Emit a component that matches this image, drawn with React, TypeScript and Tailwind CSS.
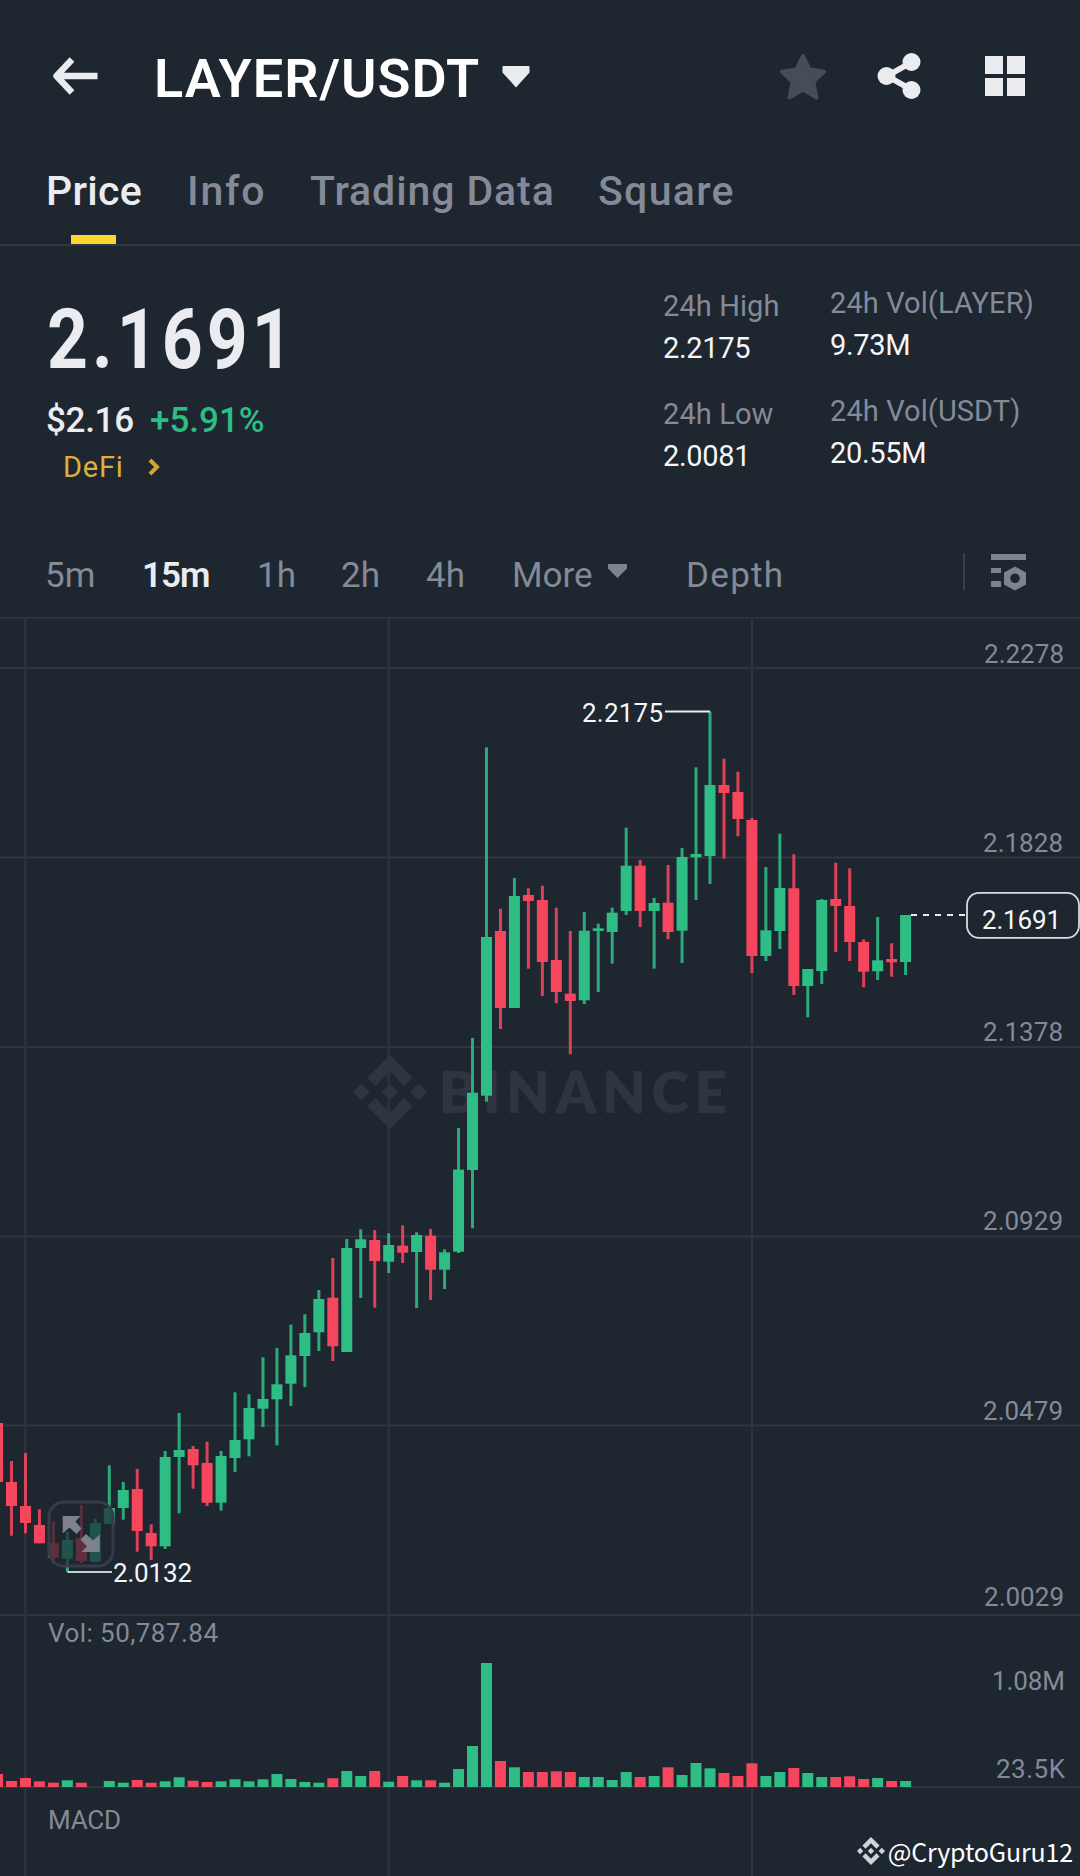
import React from 'react'

type Candle = {
  up: boolean
  high: number
  low: number
  top: number
  bottom: number
  vol: number
}

const UP = '#2ebd85'
const DOWN = '#f6465d'
const STEP = 13.97
const FIRST_X = 11.5
const VOL_BASE = 1787

const c = (side: string, high: number, low: number, top: number, bottom: number, vol: number): Candle => ({
  up: side === 'u',
  high,
  low,
  top,
  bottom,
  vol
})

// first candle is half hidden behind the left edge
const candles: Candle[] = [
  c('d', 1423, 1482, 1423, 1482, 13),
  c('d', 1461, 1535.7, 1482, 1506, 6),
  c('d', 1453, 1533.3, 1506, 1523, 9),
  c('d', 1509.3, 1543.3, 1525, 1543.3, 5.7),
  c('d', 1521.7, 1563.3, 1543.3, 1557.5, 4.3),
  c('u', 1532, 1572, 1540, 1558.7, 6.7),
  c('d', 1505, 1563, 1538, 1561, 4.3),
  c('u', 1519, 1562, 1523, 1561.7, 0),
  c('u', 1465.3, 1524, 1508, 1524, 6),
  c('u', 1482, 1519.7, 1490, 1508, 4.3),
  c('d', 1469, 1551.7, 1489, 1531, 7),
  c('d', 1524.3, 1560, 1533, 1546.3, 4.3),
  c('u', 1451, 1549, 1457, 1546.3, 5.7),
  c('u', 1413, 1513.3, 1450, 1457, 9.7),
  c('d', 1446, 1488.7, 1449, 1465.3, 6.3),
  c('d', 1441.7, 1506, 1463, 1502.7, 5),
  c('u', 1451, 1510.7, 1456, 1502.7, 5.7),
  c('u', 1392.3, 1472, 1440, 1458, 7.7),
  c('u', 1394.3, 1456.3, 1408, 1439.3, 5.7),
  c('u', 1357.3, 1427, 1399, 1408.7, 7.7),
  c('u', 1348, 1445.3, 1384.3, 1399.3, 13),
  c('u', 1324.7, 1406, 1355.3, 1383.7, 8),
  c('u', 1314.3, 1387, 1333, 1356, 5),
  c('u', 1290, 1351, 1299, 1332.3, 4.3),
  c('d', 1258, 1361, 1297.7, 1346.3, 8.7),
  c('u', 1239, 1352, 1248, 1352, 16),
  c('u', 1229.3, 1298, 1239.3, 1248, 11),
  c('d', 1230, 1307.7, 1240, 1261, 16),
  c('u', 1233.3, 1273, 1245, 1261.7, 5.3),
  c('d', 1225.3, 1263, 1245.7, 1252.7, 11),
  c('u', 1232.3, 1308, 1235, 1252, 6.7),
  c('d', 1229, 1300, 1235.7, 1269.7, 6.7),
  c('u', 1249.3, 1289, 1252.3, 1269.7, 4.3),
  c('u', 1128, 1253, 1169.6, 1251.7, 18),
  c('u', 1038, 1228.3, 1092.7, 1170, 41),
  c('u', 747.3, 1101.7, 937, 1095.7, 124),
  c('d', 908.7, 1029, 931, 1008, 26),
  c('u', 878, 1008, 896, 1008, 19.7),
  c('d', 888.3, 968.7, 895, 901, 15),
  c('d', 885.7, 996, 900, 962, 15),
  c('d', 907.7, 1003.3, 960, 992, 15.7),
  c('d', 931, 1054.3, 993.7, 1001, 15),
  c('u', 912, 1004, 930.7, 1000.3, 10),
  c('u', 923.7, 992, 928.3, 931, 10),
  c('u', 907.7, 963.7, 912.7, 932, 7),
  c('u', 827.7, 915, 865.7, 911, 15),
  c('d', 860, 927, 865.7, 911, 10),
  c('u', 898, 968.7, 903, 911, 11),
  c('d', 865, 939.3, 902.7, 932, 19.7),
  c('u', 848, 963, 857, 930.7, 12),
  c('u', 767.3, 900, 854, 857.3, 24),
  c('u', 711.5, 884, 785, 856, 18.7),
  c('d', 758.7, 858.7, 785, 793, 14),
  c('d', 771.7, 836.3, 792, 819, 11),
  c('d', 818, 973, 820, 956, 23.7),
  c('u', 867, 961, 930.3, 956, 11),
  c('u', 833.7, 949, 888, 931, 15),
  c('d', 854.3, 995, 888.3, 986, 19),
  c('u', 969, 1017.3, 969, 986, 14),
  c('u', 899, 984, 900, 971, 10),
  c('d', 862.7, 952, 899, 906, 10),
  c('d', 868.3, 961, 906, 942, 10.7),
  c('d', 939.3, 987.3, 942, 971.7, 8),
  c('u', 917, 980, 960.3, 971.3, 9),
  c('d', 943.3, 976.7, 959, 962.3, 6),
  c('u', 915, 975, 915, 962, 6)
]

const axisLabels = [
  { text: '2.2278', x: 984, y: 663, w: 80 },
  { text: '2.1828', x: 983, y: 852, w: 80 },
  { text: '2.1378', x: 983, y: 1041, w: 80 },
  { text: '2.0929', x: 983, y: 1230, w: 80 },
  { text: '2.0479', x: 983, y: 1419.5, w: 80 },
  { text: '2.0029', x: 984, y: 1606, w: 80 },
  { text: '1.08M', x: 992, y: 1690, w: 73 },
  { text: '23.5K', x: 996, y: 1778, w: 69 }
]

const hLines = [668, 857.5, 1047, 1236.5, 1425.5, 1615, 1787]
const vLines = [25.3, 388.6, 752]

const BinanceMark: React.FC<{ className?: string }> = ({ className }) => (
  <svg viewBox="0 0 24 24" className={className} fill="currentColor">
    <BinancePath />
  </svg>
)

const BinancePath: React.FC = () => (
  <path d="M16.624 13.92l2.7175 2.7154-7.353 7.353-7.353-7.352 2.7175-2.7164 4.6355 4.6595zM21.26 9.284L24 12l-2.7154 2.7164L18.568 12zM11.9885 9.285l2.7163 2.6914-2.7164 2.7174L9.272 12zM2.7164 9.284L5.4088 12l-2.6914 2.6924L0 12zM11.9885.0115l7.353 7.329-2.7174 2.7154-4.6356-4.6356-4.6355 4.6595-2.7174-2.7154z" />
)

const Header: React.FC = () => (
  <header className="flex h-[154px] items-center">
    <svg viewBox="0 0 46 38" className="mb-[2px] ml-[52px] h-[38px] w-[46px] shrink-0" fill="none" stroke="#eaecef" strokeWidth="6.4">
      <path d="M45.5 19H5M20 2.5L4.5 19L20 35.5" strokeLinejoin="round" />
    </svg>
    <h1 className="mt-[4px] ml-[56px] w-[348px] text-[54px] leading-none font-semibold tracking-[1px] whitespace-nowrap text-white">
      LAYER/USDT
    </h1>
    <svg viewBox="0 0 28 22" className="h-[22px] w-[28px]" fill="#eaecef">
      <path d="M1.5 0h25a1 1 0 0 1 1 1v5.5L14 21.5L0.5 6.500V1a1 1 0 0 1 1-1z" />
    </svg>
    <svg viewBox="0 0 46 47" className="mb-[1px] ml-[250px] h-[47px] w-[46px]" fill="#474d57" stroke="#474d57" strokeWidth="4" strokeLinejoin="round">
      <path d="M23 3l6.600 13.600 14.400 2.100-10.700 10.100 3.200 15.700L23 36.500 9.500 44.500l3.200-15.700L2 18.700l14.400-2.100z" />
    </svg>
    <svg viewBox="0 0 44 48" className="mb-[2px] ml-[51px] h-[48px] w-[44px]" fill="#eaecef">
      <path d="M10 24L35 10M10 24L35 38" stroke="#eaecef" strokeWidth="6" />
      <circle cx="9.500" cy="24" r="9" />
      <circle cx="34.500" cy="10" r="9" />
      <circle cx="34.500" cy="38" r="9" />
    </svg>
    <div className="mb-[2px] ml-[64px] grid h-[40px] w-[40px] grid-cols-2 gap-[4px]">
      <span className="bg-[#eaecef]" />
      <span className="bg-[#eaecef]" />
      <span className="bg-[#eaecef]" />
      <span className="bg-[#eaecef]" />
    </div>
  </header>
)

const Tabs: React.FC = () => (
  <nav className="flex h-[92px] border-b-2 border-[#333943] pl-[46px] text-[41px] leading-[75px] font-medium whitespace-nowrap text-[#848a97]">
    <div className="relative w-[141px] tracking-[0.3px] text-[#eaecef]">
      Price
      <span className="absolute bottom-0 left-[25px] h-[9px] w-[45px] bg-[#fcd535]" />
    </div>
    <div className="w-[123px] tracking-[1.8px]">Info</div>
    <div className="w-[288px] tracking-[0.9px]">Trading Data</div>
    <div className="tracking-[1.3px]">Square</div>
  </nav>
)

const Stat: React.FC<{ label: string; value: string }> = ({ label, value }) => (
  <div className="text-[29px] leading-[42px] whitespace-nowrap">
    <div className="tracking-[0.1px] text-[#848a97]">{label}</div>
    <div className="tracking-[-0.3px] text-[#f5f6f8]">{value}</div>
  </div>
)

const Ticker: React.FC = () => (
  <section className="flex h-[286px] text-[#eaecef]">
    <div className="w-[663px] pt-[43px] pl-[46px]">
      <div className="ml-[1px] origin-left scale-x-[0.86] text-[83px] leading-[101px] font-bold tracking-[4.7px]">2.1691</div>
      <div className="flex text-[35px] leading-[61px] font-medium">
        <span className="w-[104px] tracking-[-0.3px]">$2.16</span>
        <span className="text-[#2ebd85]">+5.91%</span>
      </div>
      <div className="flex items-center pl-[17px] text-[29px] leading-[33px] text-[#dcb03a]">
        <span className="w-[85px] tracking-[0.8px]">DeFi</span>
        <svg viewBox="0 0 12 18" className="mb-[2px] h-[18px] w-[12px]" fill="none" stroke="#d0a536" strokeWidth="4">
          <path d="M2 2l7 7-7 7" />
        </svg>
      </div>
    </div>
    <div className="flex w-[167px] flex-col gap-[24px] pt-[39px]">
      <Stat label="24h High" value="2.2175" />
      <Stat label="24h Low" value="2.0081" />
    </div>
    <div className="flex flex-col gap-[24px] pt-[36px]">
      <Stat label="24h Vol(LAYER)" value="9.73M" />
      <Stat label="24h Vol(USDT)" value="20.55M" />
    </div>
  </section>
)

const Intervals: React.FC = () => (
  <div className="flex h-[85px] items-center pt-[3px] pl-[45px] text-[35px] whitespace-nowrap text-[#848a97]">
    <span className="w-[97px]">5m</span>
    <span className="w-[115px] font-semibold tracking-[-1px] text-[#eaecef]">15m</span>
    <span className="w-[84px]">1h</span>
    <span className="w-[85px]">2h</span>
    <span className="w-[86px]">4h</span>
    <span className="w-[96px]">More</span>
    <svg viewBox="0 0 19 14" className="mb-[10px] h-[14px] w-[19px]" fill="#7d8490">
      <path d="M0 0h19v4.500L9.500 14L0 4.500z" />
    </svg>
    <span className="ml-[59px] w-[277px] tracking-[1.3px]">Depth</span>
    <span className="mb-[10px] h-[37px] w-[2px] bg-[#3a404b]" />
    <svg viewBox="0 0 35 37" className="mb-[7px] ml-[26px] h-[37px] w-[35px]" fill="#7d8490">
      <path d="M0 0h35v6H0zM0 14h10v5H0zM0 27h10v6H0z" />
      <path fillRule="evenodd" d="M24 12.500l11 6v12l-11 6-11-6v-12zM24 19.500a4.800 4.800 0 1 0 0 9.600a4.800 4.800 0 1 0 0-9.600z" />
    </svg>
  </div>
)

const Chart: React.FC = () => (
  <svg
    viewBox="0 617 1080 1259"
    className="block h-[1259px] w-[1080px] font-[Roboto,'Liberation_Sans',sans-serif] text-[26px]"
  >
    <g stroke="#30363f" strokeWidth="2">
      <path d="M0 617H1080" strokeWidth="3" />
      {hLines.map((y) => (
        <path key={y} d={`M0 ${y}H1080`} />
      ))}
      {vLines.map((x) => (
        <path key={x} d={`M${x} 617V1876`} />
      ))}
    </g>

    <g fill="#2f3440">
      <g transform="translate(353 1055) scale(3.083)">
        <BinancePath />
      </g>
      <text x="439" y="1113" textLength="288" className="font-[Lato,sans-serif] text-[57px] font-extrabold">
        BINANCE
      </text>
    </g>

    {candles.map((k, i) => {
      const x = FIRST_X + (i - 1) * STEP
      return (
        <g key={i} fill={k.up ? UP : DOWN}>
          <rect x={x - 1.5} y={k.high} width="3" height={k.low - k.high} opacity="0.88" />
          <rect x={x - 5.5} y={k.top} width="11" height={k.bottom - k.top} />
          <rect x={x - 5.5} y={VOL_BASE - k.vol} width="11" height={k.vol} />
        </g>
      )
    })}

    <g fill="#848a97">
      {axisLabels.map((l) => (
        <text key={l.text} x={l.x} y={l.y} textLength={l.w}>
          {l.text}
        </text>
      ))}
      <text x="48" y="1642" textLength="170">Vol: 50,787.84</text>
      <text x="48" y="1829" textLength="73">MACD</text>
    </g>

    <path d="M665 711.500H710" stroke="#eaecef" strokeWidth="2" />
    <text x="582" y="721.500" textLength="81" fill="#f5f6f8">2.2175</text>

    {/* fullscreen toggle */}
    <rect x="49" y="1502" width="64" height="64" rx="15" fill="#1e2630" fillOpacity="0.7" stroke="#363c47" strokeWidth="3" />
    <path
      fill="#7d828e"
      d="M62.700 1516H80.500L75.500 1521.500L81.500 1528.500L76.500 1534L69.500 1527.500L62.700 1533.500zM99.700 1552H81.500L87 1546.500L80.500 1539.500L86 1534L93 1540.500L99.700 1534.500z"
    />
    <path d="M67.500 1572H112" stroke="#c9ccd2" strokeWidth="2" />
    <text x="113" y="1582" textLength="79" fill="#f5f6f8">2.0132</text>

    {/* last price */}
    <path d="M911 915H966" stroke="#eaecef" strokeWidth="2" strokeDasharray="6 6" />
    <rect x="967" y="892.800" width="112" height="45" rx="12" fill="#1e2630" stroke="#d9dbe0" strokeWidth="1.800" />
    <text x="982" y="929" textLength="79" fill="#f5f6f8">2.1691</text>
  </svg>
)

const App: React.FC = () => {
  return (
    <div className="relative h-[1876px] w-[1080px] overflow-hidden bg-[#1e2630] font-[Roboto,'Liberation_Sans',sans-serif]">
      <Header />
      <Tabs />
      <Ticker />
      <Intervals />
      <Chart />
      <div className="absolute right-[7px] bottom-[7px] flex items-center gap-[3px] font-['Noto_Sans_CJK_SC',sans-serif] text-[25px] leading-[36px] font-normal tracking-[-0.15px] text-white">
        <BinanceMark className="h-[28px] w-[28px] text-[#d0d3d8]" />
        @CryptoGuru12
      </div>
    </div>
  )
}

export default App
